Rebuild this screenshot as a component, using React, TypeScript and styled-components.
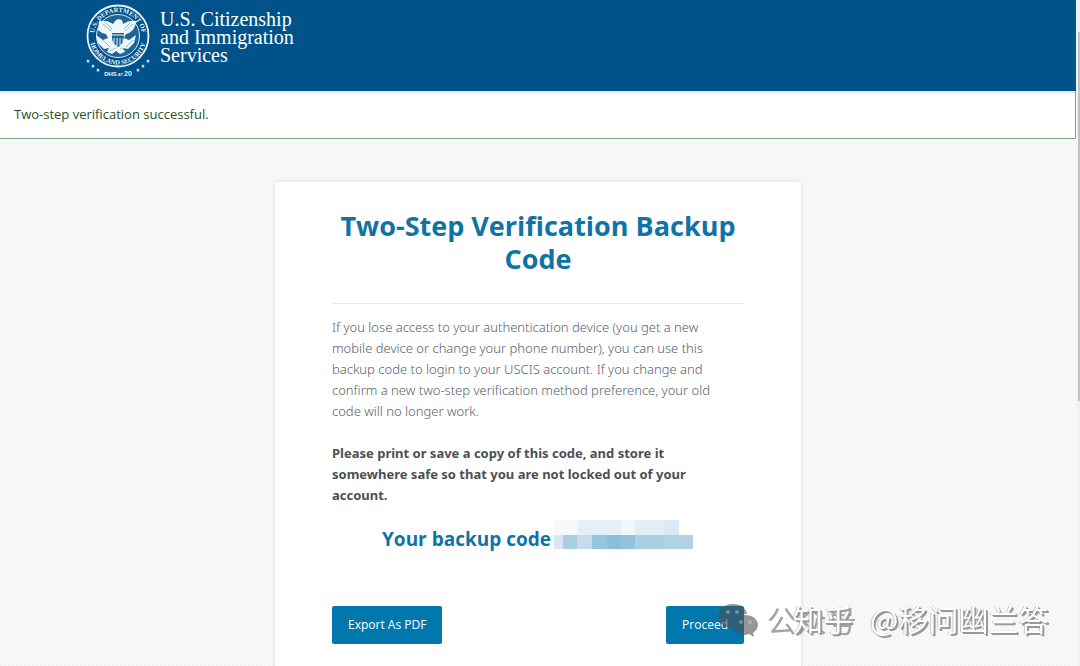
import React from "react";
import styled, { createGlobalStyle } from "styled-components";

const GlobalStyle = createGlobalStyle`
  *, *::before, *::after { box-sizing: border-box; }
  body {
    margin: 0;
    color: #5b616b;
    font: 300 13px/21px "Noto Sans", "Open Sans", sans-serif;
    background: #f6f6f6 repeating-conic-gradient(#f9f9f9 0 25%, #f5f5f5 0 50%) 0 0 / 4px 4px;
  }
  h1, h2, p, hr { margin: 0; }
`;

const Page = styled.div`
  display: flex;
  flex-direction: column;
  height: 100vh;
  padding-right: 4px;
  overflow: hidden;
`;

const Header = styled.header`
  flex: none;
  height: 91px;
  padding: 4px 0 0 86px;
  background: #00528a;
`;

const Brand = styled.a`
  display: inline-flex;
  align-items: flex-start;
  gap: 10px;
  color: #fff;
  text-decoration: none;
`;

const Seal = styled.svg`
  display: block;
  width: 64px;
  height: 74px;
`;

const BrandName = styled.span`
  display: flex;
  flex-direction: column;
  padding-top: 6px;
  font: 400 20px/18px "Liberation Serif", serif;
`;

const Alert = styled.div`
  flex: none;
  height: 48px;
  padding: 13px 14px;
  color: #23502b;
  font-family: "Open Sans", sans-serif;
  font-weight: 400;
  background: #fff;
  border: solid #86a586;
  border-width: 0 1px 1px 0;
  box-shadow: inset 0 4px 3px -2px #e4e6e2;
`;

const Card = styled.main`
  flex: none;
  width: 526px;
  max-width: 100%;
  margin: 43px auto 0;
  padding: 27px 57px 60px;
  background: #fff;
  box-shadow: 0 0 4px #dadada;
`;

const Title = styled.h1`
  color: #0f73a5;
  font-family: "Open Sans", sans-serif;
  font-size: 27px;
  font-weight: 700;
  line-height: 33px;
  text-align: center;
`;

const Divider = styled.hr`
  margin: 28px 0 13px;
  border: 0;
  border-top: 1px solid #e8e8e8;
`;

const Notice = styled.p`
  margin-top: 21px;
  color: #4c4f54;
  font-weight: 700;
`;

const CodeHeading = styled.h2`
  display: flex;
  justify-content: center;
  align-items: flex-start;
  gap: 3px;
  margin-top: 14px;
  color: #0f73a5;
  font-family: "Open Sans", sans-serif;
  font-size: 19px;
  font-weight: 700;
  line-height: 38px;
`;

const Mosaic = styled.svg`
  width: 140px;
  height: 30px;
`;

const Actions = styled.div`
  display: flex;
  justify-content: space-between;
  margin-top: 48px;
`;

const Button = styled.button`
  height: 38px;
  padding: 0 16px;
  color: #fff;
  font: 400 12px/20px "Open Sans", sans-serif;
  background: #0078ad;
  border: 0;
  border-radius: 2px;
`;

const ScrollThumb = styled.div`
  position: fixed;
  top: 0;
  right: 0;
  width: 3px;
  height: 100vh;
  background: linear-gradient(#c2c2c2 0 0) 100% 32px / 2px 369px no-repeat #f1f1f1;
`;

const Watermark = styled.div`
  position: fixed;
  right: 22px;
  bottom: 16px;
  width: 340px;
  height: 60px;
  pointer-events: none;
`;

const WatermarkArt = styled.svg`
  display: block;
  width: 340px;
  height: 60px;
  font: 400 30px "Noto Sans CJK SC", sans-serif;
`;

const Embossed = styled.g`
  fill: #fff;
  text-shadow: 2px 2px 0 #999, 1px 1px 0 #999, -1px 0 0 #c8c8c8;
`;

const topCells: [number, number, string][] = [
  [0, 24, "#f6f9fb"], [24, 43, "#e5eff6"], [67, 14, "#f3f7fa"], [81, 29, "#e3eff5"], [110, 15, "#d9eaf2"],
];
const bottomCells: [number, number, string][] = [
  [0, 9, "#d9e7ef"], [9, 14, "#a8cee0"], [23, 15, "#c6dde9"], [38, 15, "#96c5dc"], [53, 14, "#8abfd8"],
  [67, 14, "#91c3da"], [81, 29, "#acd0e2"], [110, 29, "#afd3e4"],
];
const stars: [number, number][] = [[2, 57], [7, 62], [12, 66], [52, 66], [57, 62], [62, 57]];

function DhsSeal() {
  return (
    <Seal viewBox="0 0 64 74" aria-hidden="true">
      <defs>
        <path id="upper" d="M9.400 40.200A24 24 0 1 1 54.600 40.200" />
        <path id="lower" d="M3.400 32A28.600 28.600 0 0 0 60.600 32" />
        <path id="star" d="M0-2 .6-.6 2-.6.9.4 1.300 1.900 0 1-1.300 1.900-.9.4-2-.6-.6-.6Z" />
      </defs>
      <circle cx="32" cy="32" r="30.500" fill="none" stroke="#e9f5fb" strokeWidth="1.800" />
      <circle cx="32" cy="32" r="21.500" fill="#1c659a" stroke="#d7eaf4" strokeWidth="1" />
      <g fill="#e9f5fb" fontFamily="Liberation Serif, serif" fontSize="6.500" fontWeight="700">
        <text textAnchor="middle"><textPath href="#upper" startOffset="50%">U.S. DEPARTMENT OF</textPath></text>
        <text textAnchor="middle"><textPath href="#lower" startOffset="50%">HOMELAND SECURITY</textPath></text>
      </g>
      <path fill="#edf7fc" d="M13 17c5-1 10 0 14 3l2-3 3-2 4 1 1 4c4-3 9-4 14-3l-2 5-2 4-4 3-3 1-2 4 5 2 7-5-2 8-6 6-5-1 2 4-5 2-4-3-4 3-5-2 2-4-5 1-6-6-2-8 7 5 5-2-2-4-4-1-4-3Z" />
      <path fill="#1c659a" d="M26 29h12v5c0 4-3 7-6 9-3-2-6-5-6-9Z" />
      <path fill="none" stroke="#edf7fc" d="M28 34v5m3-5v8m3-8v7m3-7v4M26 31h12" />
      <path fill="none" stroke="#6fa2c3" strokeWidth=".7" d="m17 20 8 7m-5-8 6 6m21-5-8 7m5-8-6 6M17 36l7 7m23-7-7 7M24 47l6-3m10 3-6-3" />
      {stars.map(([x, y]) => <use key={x} href="#star" x={x} y={y} fill="#e9f5fb" />)}
      <text x="32" y="72" fill="#e9f5fb" textAnchor="middle" fontFamily="Liberation Sans, sans-serif" fontWeight="700">
        <tspan fontSize="6">DHS</tspan><tspan fontSize="4"> AT </tspan><tspan fontSize="7">20</tspan>
      </text>
    </Seal>
  );
}

export default function App() {
  return (
    <>
      <GlobalStyle />
      <Page>
        <Header>
          <Brand href="#">
            <DhsSeal />
            <BrandName>
              <span>U.S. Citizenship</span>
              <span>and Immigration</span>
              <span>Services</span>
            </BrandName>
          </Brand>
        </Header>
        <Alert role="status">Two-step verification successful.</Alert>
        <Card>
          <Title>Two-Step Verification Backup<br />Code</Title>
          <Divider />
          <p>
            If you lose access to your authentication device (you get a new<br />
            mobile device or change your phone number), you can use this<br />
            backup code to login to your USCIS account. If you change and<br />
            confirm a new two-step verification method preference, your old<br />
            code will no longer work.
          </p>
          <Notice>
            Please print or save a copy of this code, and store it<br />
            somewhere safe so that you are not locked out of your<br />
            account.
          </Notice>
          <CodeHeading>
            Your backup code
            <Mosaic viewBox="0 0 140 30" aria-hidden="true">
              {topCells.map(([x, w, c]) => <rect key={x} x={x} y="0" width={w} height="15" fill={c} />)}
              {bottomCells.map(([x, w, c]) => <rect key={x} x={x} y="15" width={w} height="14" fill={c} />)}
            </Mosaic>
          </CodeHeading>
          <Actions>
            <Button type="button">Export As PDF</Button>
            <Button type="button">Proceed</Button>
          </Actions>
        </Card>
      </Page>
      <ScrollThumb />
      <Watermark>
        <WatermarkArt viewBox="0 0 340 60">
          <g fill="#505050" fillOpacity=".6">
            <path d="M15 14C6 14 0 19 0 26c0 4 2 7 5 9l-1 4 5-2 5 1c-1-8 5-14 15-14-1-6-6-10-14-10Z" />
            <path d="M27 25c-7 0-13 4-13 10s6 10 13 10l4-1 5 3-1-4c3-2 5-5 5-8 0-6-6-10-13-10Z" />
          </g>
          <g fill="#ddd" fillOpacity=".4">
            <circle cx="10" cy="22" r="2" /><circle cx="19" cy="22" r="2" />
            <circle cx="23" cy="32" r="2" /><circle cx="32" cy="32" r="2" />
          </g>
          <g fill="#a3a3a3">
            <text x="49" y="42">公众号</text>
          </g>
          <Embossed>
            <text x="75" y="41">知乎</text>
            <text x="152" y="41">@移问幽兰答</text>
          </Embossed>
        </WatermarkArt>
      </Watermark>
    </>
  );
}
